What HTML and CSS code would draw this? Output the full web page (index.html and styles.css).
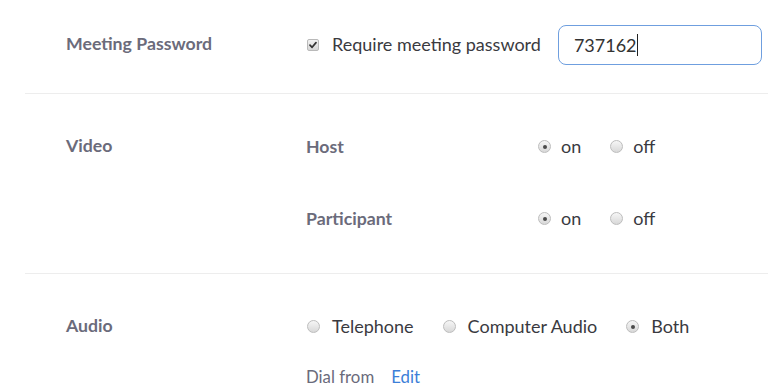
FILE: index.html
```html
<!DOCTYPE html>
<html>
<head>
<meta charset="utf-8">
<link rel="stylesheet" href="styles.css">
</head>
<body>
<div class="settings">
  <section class="section section-password">
    <div class="label">Meeting Password</div>
    <div class="content">
      <div class="row">
        <span class="checkbox">
          <svg width="8" height="8" viewBox="0 0 8 8"><path d="M1 4.2 L3.1 6.3 L7 1.6" fill="none" stroke="#333" stroke-width="1.7" stroke-linecap="round" stroke-linejoin="round"/></svg>
        </span>
        <span class="opt-text">Require meeting password</span>
        <div class="input"><span class="value">737162</span></div>
      </div>
    </div>
  </section>

  <section class="section section-video">
    <div class="label">Video</div>
    <div class="content">
      <div class="row sub-row">
        <div class="sub-label">Host</div>
        <span class="radio checked"></span><span class="opt-text opt-on">on</span>
        <span class="radio"></span><span class="opt-text">off</span>
      </div>
      <div class="row sub-row">
        <div class="sub-label">Participant</div>
        <span class="radio checked"></span><span class="opt-text opt-on">on</span>
        <span class="radio"></span><span class="opt-text">off</span>
      </div>
    </div>
  </section>

  <section class="section section-audio">
    <div class="label">Audio</div>
    <div class="content">
      <div class="row">
        <span class="radio"></span><span class="opt-text">Telephone</span>
        <span class="radio"></span><span class="opt-text">Computer Audio</span>
        <span class="radio checked"></span><span class="opt-text">Both</span>
      </div>
      <div class="row dial-row">
        <span class="dial">Dial from</span><a class="edit">Edit</a>
      </div>
    </div>
  </section>
</div>
</body>
</html>
```
FILE: styles.css
```css
html, body {
  margin: 0;
  padding: 0;
  background: #ffffff;
}
body {
  font-family: Lato, "Open Sans", sans-serif;
  color: #3a3a3f;
  width: 768px;
  height: 386px;
  overflow: hidden;
}
.settings {
  margin-left: 25px;
}
.section {
  display: flex;
  align-items: flex-start;
}
.section + .section {
  border-top: 1px solid #ededed;
}
.label {
  width: 240px;
  padding-left: 41px;
  font-size: 17.7px;
  font-weight: 700;
  color: #6b6b7b;
  line-height: 28px;
  flex-shrink: 0;
}
.content {
  display: flex;
  flex-direction: column;
}
.row {
  display: flex;
  align-items: center;
  height: 28px;
}
.section-password {
  height: 93px;
  align-items: center;
}
.section-password .label {
  margin-top: -5px;
}
.section-password .row {
  margin-top: -5px;
}
.section-video {
  padding-top: 38px;
  box-sizing: border-box;
  height: 180px;
}
.section-video .sub-row + .sub-row {
  margin-top: 44px;
}
.sub-label {
  width: 232px;
  font-size: 17.7px;
  font-weight: 700;
  color: #6b6b7b;
}
.section-audio {
  padding-top: 38px;
}
.checkbox {
  width: 12px;
  height: 12px;
  box-sizing: border-box;
  border: 1px solid #b9b9b9;
  border-radius: 2px;
  background: linear-gradient(#f2f2f2, #d6d6d6);
  display: flex;
  align-items: center;
  justify-content: center;
  margin-left: 1px;
  margin-right: 13px;
  margin-top: 2px;
}
.checkbox svg {
  display: block;
}
.opt-text {
  font-size: 18px;
  color: #3a3a3f;
  margin-right: 31px;
}
.section-audio .opt-text {
  margin-right: 29px;
}
.section-password .opt-text {
  margin-right: 17px;
}
.radio {
  width: 13px;
  height: 13px;
  box-sizing: border-box;
  border-radius: 50%;
  border: 1px solid #bdbdbd;
  background: linear-gradient(#f6f6f6, #d8d8d8);
  margin-right: 10px;
  position: relative;
  flex-shrink: 0;
  margin-top: 1px;
}
.section-audio .radio {
  margin-right: 12px;
}
.radio.checked::after {
  content: "";
  position: absolute;
  left: 3.5px;
  top: 3.5px;
  width: 4px;
  height: 4px;
  border-radius: 50%;
  background: #4a4a4a;
}
.opt-on {
  margin-right: 29px;
}
.section-audio .row:first-child {
  margin-left: 1px;
}
.input {
  width: 204px;
  height: 40px;
  box-sizing: border-box;
  border: 1.5px solid #6f9fdf;
  border-radius: 8px;
  padding-left: 15px;
  display: flex;
  align-items: center;
  font-size: 18px;
  color: #333;
  margin-top: 1px;
}
.value {
  border-right: 1px solid #222;
  line-height: 22px;
}
.dial-row {
  margin-top: 22px;
}
.dial {
  font-size: 16.8px;
  color: #6b6b7b;
  margin-right: 17px;
}
.edit {
  font-size: 16.8px;
  color: #3c7fd8;
  cursor: pointer;
}
```
